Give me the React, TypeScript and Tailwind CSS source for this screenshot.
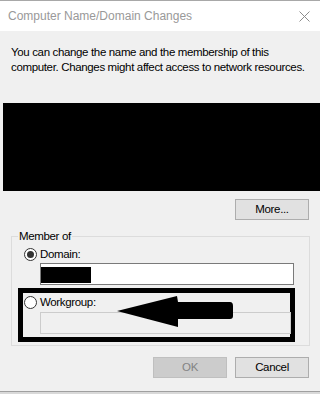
function Radio({ checked }: { checked?: boolean }) {
  return (
    <span className="flex h-[13px] w-[13px] items-center justify-center rounded-full border border-[#333333] bg-white">
      {checked && <span className="h-[7px] w-[7px] rounded-full bg-[#333333]" />}
    </span>
  )
}

export default function App() {
  return (
    <div className="relative flex h-[394px] w-[320px] flex-col bg-[#f0f0f0] font-['Liberation_Sans',Arial,sans-serif] text-[11.5px] leading-[15px] tracking-[-0.35px] text-black">
      {/* Title bar */}
      <div className="flex h-[31px] items-center justify-between border-t border-[#a8a8a8] bg-white pl-[8px] pr-[10px]">
        <span className="text-[12px] tracking-normal text-[#999999]">Computer Name/Domain Changes</span>
        <svg width="11" height="11" viewBox="0 0 11 11">
          <path d="M0.5 0.5 L10.5 10.5 M10.5 0.5 L0.5 10.5" stroke="#8c8c8c" strokeWidth="1" />
        </svg>
      </div>

      <p className="mt-[14px] px-[11px]">
        You can change the name and the membership of this computer. Changes might affect access to network resources.
      </p>

      {/* redacted block */}
      <div className="ml-[3px] mt-[28px] h-[88px] w-[317px] bg-black" />

      <button className="mr-[11px] mt-[8px] h-[21px] w-[74px] self-end border border-[#adadad] bg-[#e1e1e1]">
        More...
      </button>

      {/* Member of group */}
      <div className="relative ml-[11px] mr-[10px] mt-[16px] border border-[#dcdcdc] pb-[3px] pl-[6px] pr-[7px] pt-[10px]">
        <span className="absolute -top-[8px] left-[6px] bg-[#f0f0f0] px-px">Member of</span>

        <label className="ml-[6px] flex items-center gap-[3px]">
          <Radio checked />
          <span>Domain:</span>
        </label>
        <div className="ml-[22px] mt-px flex h-[22px] w-[254px] items-center border border-[#7a7a7a] bg-white">
          <div className="mt-[2px] h-[16px] w-[50px] bg-black" />
        </div>

        <div className="mt-[3px] w-[277px] border-[5px] border-black pb-[3px] pl-px pt-[2px]">
          <label className="flex items-center gap-[3px]">
            <Radio />
            <span>Workgroup:</span>
          </label>
          <div className="ml-[16px] mt-[2px] h-[22px] w-[251px] border border-[#cccccc] bg-[#f0f0f0]" />
        </div>
      </div>

      <div className="mr-[11px] mt-[11px] flex justify-end gap-[8px]">
        <button disabled className="h-[21px] w-[74px] border border-[#bfbfbf] bg-[#cccccc] text-[#838383]">
          OK
        </button>
        <button className="h-[21px] w-[74px] border border-[#adadad] bg-[#e1e1e1]">Cancel</button>
      </div>

      <div className="mt-auto h-[3px] border-t border-[#a0a0a0] bg-[#d9d9d9]" />

      {/* annotation arrow */}
      <svg className="absolute left-0 top-0" width="320" height="394" viewBox="0 0 320 394">
        <path d="M117 311 L177 296 L178 302 L230 302 Q233 302 233 306 L233 316 Q233 319 230 319 L178 319 L178 327 Z" fill="#000" />
      </svg>
    </div>
  )
}
